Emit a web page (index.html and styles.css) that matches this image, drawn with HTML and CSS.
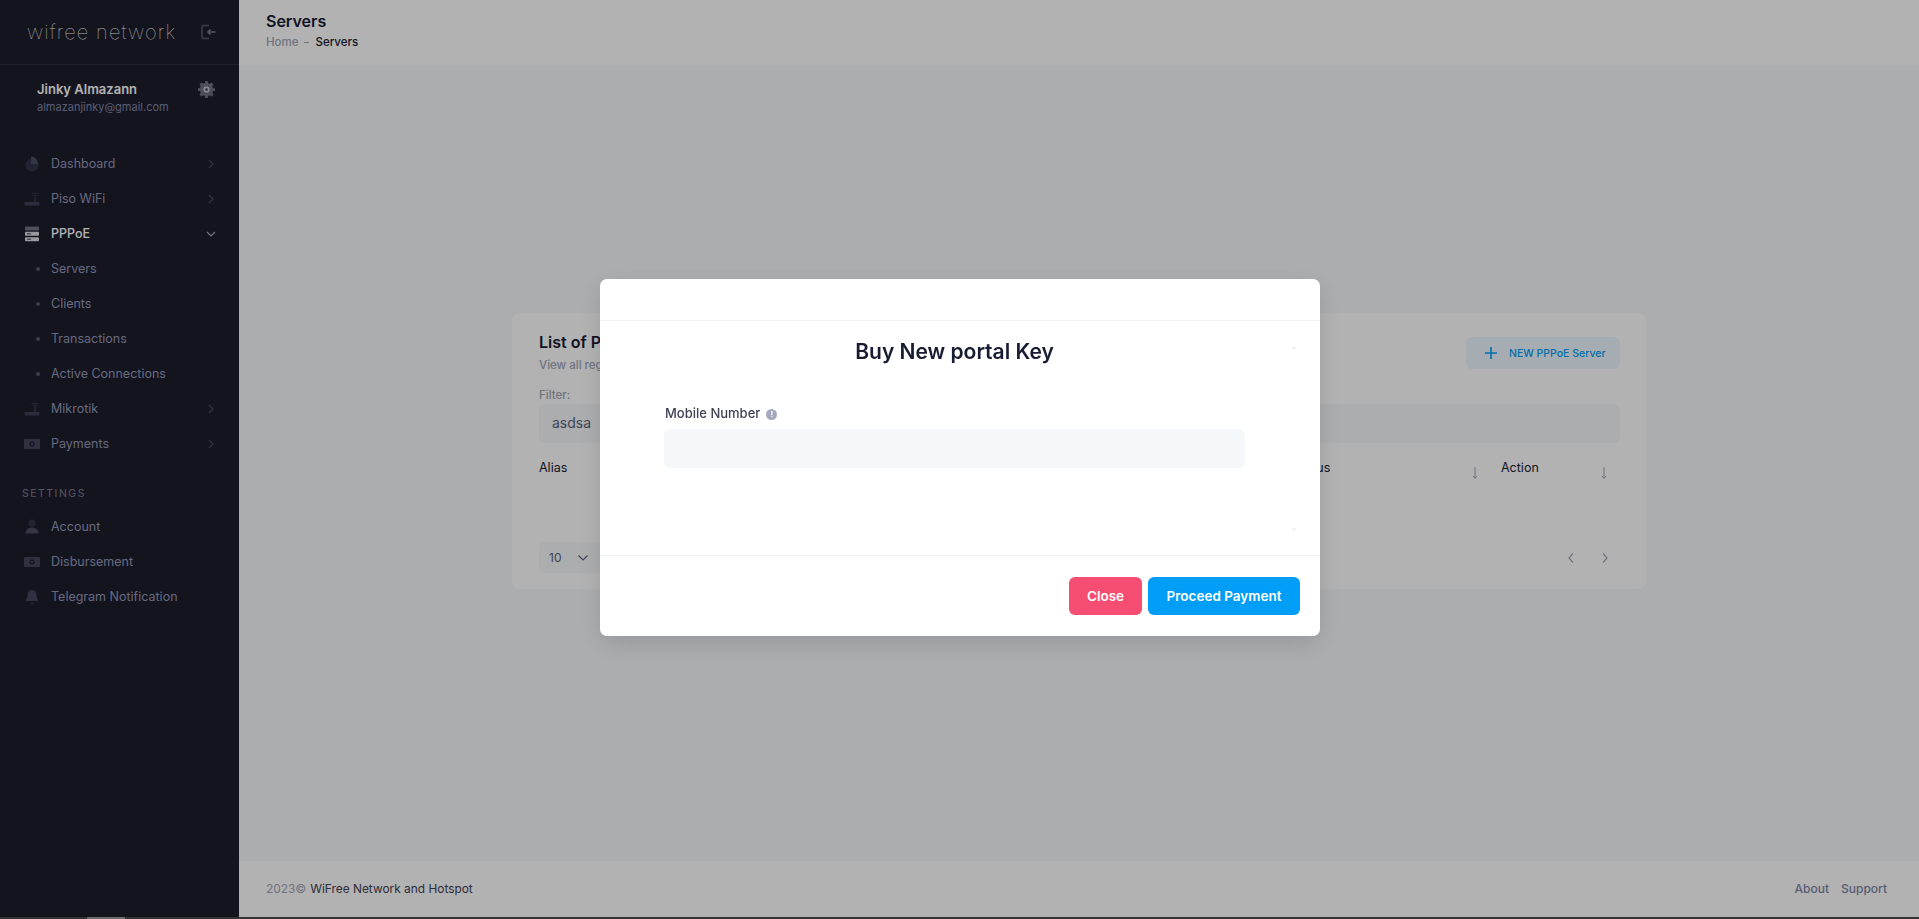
FILE: index.html
```html
<!DOCTYPE html>
<html lang="en">
<head>
<meta charset="utf-8">
<title>Servers</title>
<link rel="stylesheet" href="styles.css">
</head>
<body>
<div class="app">
  <aside class="sidebar">
    <div class="brand">
      <span class="logo">wifree network</span>
      <svg class="brand-toggle" viewBox="0 0 16 16" width="16" height="16"><path d="M9 1.500H3.500A1.500 1.500 0 0 0 2 3v10a1.500 1.500 0 0 0 1.500 1.500H9" fill="none" stroke="#565768" stroke-width="1.600"/><path d="M15.500 8H8M10.500 5.500 8 8l2.500 2.500" fill="none" stroke="#7a7b8a" stroke-width="1.600"/></svg>
    </div>
    <div class="user">
      <div class="user-text">
        <div class="user-name">Jinky Almazann</div>
        <div class="user-mail">almazanjinky@gmail.com</div>
      </div>
      <svg class="user-gear" viewBox="0 0 18 18" width="17" height="17"><path d="M7.600 0h2.800l.4 2.300 1.600.7 2-1.300 2 2-1.300 2 .7 1.600 2.200.4v2.800l-2.200.4-.7 1.600 1.300 2-2 2-2-1.300-1.600.7-.4 2.100H7.600l-.4-2.100-1.600-.7-2 1.300-2-2 1.300-2-.7-1.600L0 10.400V7.600l2.200-.4.7-1.600-1.300-2 2-2 2 1.300 1.600-.7z" fill="#6e6f80"/><circle cx="9" cy="9" r="3.300" fill="#c5c6d0"/><circle cx="9" cy="9" r="1.600" fill="#55566a"/></svg>
    </div>
    <nav class="menu">
      <a class="item">
        <svg class="ico" viewBox="0 0 16 16"><circle cx="8" cy="9" r="6.500" fill="#33344a"/><path d="M7 .5V8h7A7 7 0 0 0 7 .5z" fill="#4a4b62"/></svg>
        <span class="label">Dashboard</span><svg class="chev" viewBox="0 0 8 12"><path d="m2 2 4 4-4 4"/></svg>
      </a>
      <a class="item">
        <svg class="ico" viewBox="0 0 16 16"><path d="M1.500 11h13a1 1 0 0 1 1 1v1.500a1 1 0 0 1-1 1H1.500a1 1 0 0 1-1-1V12a1 1 0 0 1 1-1z" fill="#3f4058"/><path d="M11 11V6" stroke="#4a4b62" fill="none"/><path d="M7.500 3.500a5 5 0 0 1 7 0M9 5.200a2.800 2.800 0 0 1 4 0" stroke="#3a3b52" fill="none"/></svg>
        <span class="label">Piso WiFi</span><svg class="chev" viewBox="0 0 8 12"><path d="m2 2 4 4-4 4"/></svg>
      </a>
      <a class="item active">
        <svg class="ico" viewBox="0 0 16 16"><rect x="1" y="0.500" width="14" height="4" rx="1" fill="#6f7080"/><rect x="1" y="5.800" width="14" height="4" rx="1" fill="#dcdce2"/><rect x="1" y="11.200" width="14" height="4" rx="1" fill="#dcdce2"/><path d="M3 7.800h4M3 13.200h4" stroke="#3a3b52"/></svg>
        <span class="label">PPPoE</span><svg class="chev down" viewBox="0 0 12 8"><path d="m2 2 4 4 4-4"/></svg>
      </a>
      <a class="item sub"><i class="dot"></i><span class="label">Servers</span></a>
      <a class="item sub"><i class="dot"></i><span class="label">Clients</span></a>
      <a class="item sub"><i class="dot"></i><span class="label">Transactions</span></a>
      <a class="item sub"><i class="dot"></i><span class="label">Active Connections</span></a>
      <a class="item">
        <svg class="ico" viewBox="0 0 16 16"><path d="M1.500 11h13a1 1 0 0 1 1 1v1.500a1 1 0 0 1-1 1H1.500a1 1 0 0 1-1-1V12a1 1 0 0 1 1-1z" fill="#3f4058"/><path d="M11 11V6" stroke="#4a4b62" fill="none"/><path d="M7.500 3.500a5 5 0 0 1 7 0M9 5.200a2.800 2.800 0 0 1 4 0" stroke="#3a3b52" fill="none"/></svg>
        <span class="label">Mikrotik</span><svg class="chev" viewBox="0 0 8 12"><path d="m2 2 4 4-4 4"/></svg>
      </a>
      <a class="item">
        <svg class="ico" viewBox="0 0 16 16"><rect y="3" width="16" height="10" rx="1" fill="#45465e"/><circle cx="8" cy="8" r="2.500" fill="#1e1e2d"/><circle cx="8" cy="8" r="1.300" fill="#45465e"/></svg>
        <span class="label">Payments</span><svg class="chev" viewBox="0 0 8 12"><path d="m2 2 4 4-4 4"/></svg>
      </a>
      <div class="section">SETTINGS</div>
      <a class="item">
        <svg class="ico" viewBox="0 0 16 16"><circle cx="8" cy="4" r="3.500" fill="#33344a"/><path d="M1.500 14.500c0-3.500 3-6 6.500-6s6.500 2.500 6.500 6z" fill="#4a4b62"/></svg>
        <span class="label">Account</span>
      </a>
      <a class="item">
        <svg class="ico" viewBox="0 0 16 16"><rect y="3" width="16" height="10" rx="1" fill="#45465e"/><circle cx="8" cy="8" r="2.500" fill="#1e1e2d"/><circle cx="8" cy="8" r="1.300" fill="#45465e"/></svg>
        <span class="label">Disbursement</span>
      </a>
      <a class="item">
        <svg class="ico" viewBox="0 0 16 16"><path d="M8 1a4.500 4.500 0 0 1 4.500 4.500c0 4 1.500 5 2 6.500h-13c.5-1.500 2-2.500 2-6.500A4.500 4.500 0 0 1 8 1z" fill="#45465e"/><circle cx="8" cy="14.300" r="1.500" fill="#33344a"/></svg>
        <span class="label">Telegram Notification</span>
      </a>
    </nav>
  </aside>
  <main class="main">
    <header class="topbar">
      <h1 class="page-title">Servers</h1>
      <div class="crumbs"><span class="crumb-muted">Home</span><span class="crumb-sep"></span><span>Servers</span></div>
    </header>
    <section class="content">
      <div class="card">
        <div class="card-head">
          <div>
            <h2 class="card-title">List of PPPoE Servers</h2>
            <p class="card-sub">View all registered servers</p>
          </div>
          <button class="btn-new"><svg viewBox="0 0 14 14" width="14" height="14"><path d="M7 1v12M1 7h12" stroke="#009ef7" stroke-width="1.600" fill="none"/></svg>NEW PPPoE Server</button>
        </div>
        <label class="filter-label">Filter:</label>
        <div class="filter-input">asdsa</div>
        <div class="table-head">
          <div class="th th-alias">Alias</div>
          <div class="th th-status">Status<svg class="sort" viewBox="0 0 8 14"><path d="M4 1v11M2 10l2 2.500L6 10"/></svg></div>
          <div class="th th-action">Action<svg class="sort" viewBox="0 0 8 14"><path d="M4 1v11M2 10l2 2.500L6 10"/></svg></div>
        </div>
        <div class="pager">
          <div class="page-size">10<svg viewBox="0 0 12 8" width="12" height="8"><path d="m1.500 1.500 4.500 4.500 4.500-4.500" fill="none" stroke="#5e6278" stroke-width="1.200"/></svg></div>
          <div class="page-nav">
            <svg viewBox="0 0 8 12" width="8" height="12"><path d="M6 1.500 2 6l4 4.500" fill="none" stroke="#a1a5b7" stroke-width="1.200"/></svg>
            <svg viewBox="0 0 8 12" width="8" height="12"><path d="m2 1.500 4 4.500-4 4.500" fill="none" stroke="#a1a5b7" stroke-width="1.200"/></svg>
          </div>
        </div>
      </div>
    </section>
    <footer class="footer">
      <div class="foot-left"><span class="crumb-muted">2023©</span><span class="foot-brand">WiFree Network and Hotspot</span></div>
      <div class="foot-links"><a>About</a><a>Support</a></div>
    </footer>
  </main>
</div>
<div class="taskbar"><span class="task-tab"></span></div>
<div class="overlay">
  <div class="modal">
    <div class="modal-head"></div>
    <div class="modal-body">
      <h3 class="modal-title">Buy New portal Key</h3>
      <div class="field-label">Mobile Number<span class="info">!</span></div>
      <div class="field-input"></div>
      <i class="scroll-up"></i>
      <i class="scroll-down"></i>
    </div>
    <div class="modal-foot">
      <button class="btn btn-close">Close</button>
      <button class="btn btn-pay">Proceed Payment</button>
    </div>
  </div>
</div>
</body>
</html>
```

FILE: styles.css
```css
* { box-sizing: border-box; }
html, body { margin: 0; height: 100%; overflow: hidden; }
body { font-family: "Inter", "Liberation Sans", sans-serif; font-size: 12px; color: #181c32; background: #f5f8fa; }
h1, h2, h3, p { margin: 0; }
.app { display: flex; height: 917px; }
.taskbar { height: 2px; background: #4a4a4a; display: flex; }
.task-tab { width: 38px; height: 2px; margin-left: 87px; background: #9a9a9a; }

.sidebar { width: 239px; flex: none; background: #1e1e2d; color: #9899ac; }
.brand { height: 65px; display: flex; align-items: center; justify-content: space-between; padding: 0 23px 1px 27px; border-bottom: 1px solid #2d2d43; }
.logo { font-family: "Inter", sans-serif; font-weight: 100; font-size: 20px; letter-spacing: 1.150px; color: #fff; white-space: nowrap; }
.user { display: flex; justify-content: space-between; align-items: flex-start; padding: 16px 24px 0 37px; height: 81px; }
.user-name { font-size: 13px; font-weight: 600; color: #fff; line-height: 16px; }
.user-mail { font-size: 11px; color: #7e86a8; line-height: 18px; margin-top: 1px; }
.menu { display: flex; flex-direction: column; }
.item { height: 35px; display: flex; align-items: center; padding: 0 24px; font-size: 12.500px; color: #9398b6; }
.ico { width: 16px; height: 16px; margin-right: 11px; flex: none; }
.label { flex: 1; white-space: nowrap; }
.chev { width: 8px; height: 12px; fill: none; stroke: #4a4b5e; stroke-width: 1.200; }
.chev.down { width: 12px; height: 8px; stroke: #a1a5b7; margin-right: -2px; }
.item.active { color: #fff; font-weight: 500; }
.sub { padding-left: 36px; }
.dot { width: 4px; height: 4px; border-radius: 50%; background: #565674; margin-right: 11px; flex: none; }
.section { font-size: 10.500px; letter-spacing: 1.500px; color: #7a7b8e; padding: 26px 22px 8px; line-height: 14px; }

.main { flex: 1; display: flex; flex-direction: column; min-width: 0; }
.topbar { height: 65px; flex: none; background: #fff; padding: 11px 27px 0; }
.page-title { font-size: 16px; font-weight: 600; line-height: 20px; color: #181c32; }
.crumbs { display: flex; align-items: center; font-size: 11.500px; font-weight: 500; line-height: 16px; margin-top: 3px; color: #181c32; }
.crumb-muted { color: #a1a5b7; }
.crumb-sep { width: 5px; height: 1px; background: #a1a5b7; margin: 0 6px; }

.content { flex: 1; display: flex; justify-content: center; padding-top: 248px; }
.card { width: 1134px; height: 276px; background: #fff; border-radius: 8px; padding: 18px 26px 0 27px; display: flex; flex-direction: column; }
.card-head { display: flex; justify-content: space-between; align-items: flex-start; height: 56px; }
.card-title { font-size: 16px; font-weight: 600; line-height: 22px; color: #181c32; }
.card-sub { font-size: 11.500px; color: #a1a5b7; font-weight: 500; line-height: 16px; margin-top: 4px; }
.btn-new { width: 154px; height: 32px; margin-top: 6px; border: 0; border-radius: 6px; background: #ecf8ff; color: #009ef7; font: 500 10.500px "Inter", sans-serif; display: flex; align-items: center; gap: 11px; padding: 0 0 0 18px; }
.filter-label { font-size: 11.500px; font-weight: 500; color: #a1a5b7; line-height: 16px; }
.filter-input { height: 39px; margin-top: 1px; border-radius: 6px; background: #f5f8fa; padding: 0 13px; line-height: 38px; font-size: 14px; color: #5e6278; }
.table-head { display: flex; height: 38px; padding-top: 16px; line-height: 18px; font-size: 12.500px; color: #181c32; }
.th { display: flex; justify-content: space-between; }
.th-alias { flex: 1; }
.th-status { width: 186px; margin-right: 22px; }
.th-action { width: 119px; padding-right: 12px; }
.sort { width: 8px; height: 14px; fill: none; stroke: #a1a5b7; stroke-width: 1; margin-top: 7px; }
.pager { display: flex; justify-content: space-between; align-items: center; margin-top: 61px; }
.page-size { width: 70px; height: 31px; border-radius: 6px; background: #f5f8fa; display: flex; align-items: center; justify-content: space-between; padding: 0 20px 0 10px; font-size: 12px; color: #5e6278; }
.page-nav { display: flex; gap: 26px; padding-right: 11px; }

.footer { height: 56px; flex: none; background: #fff; display: flex; align-items: center; justify-content: space-between; padding: 0 32px 2px 27px; font-size: 12px; }
.foot-left { font-size: 11.900px; }
.foot-brand { margin-left: 4px; color: #3f4254; }
.foot-links { display: flex; gap: 12px; color: #7e86a8; font-weight: 500; }

.overlay { position: fixed; inset: 0; background: rgba(0, 0, 0, .3); }
.modal { position: absolute; left: 600px; top: 279px; width: 720px; height: 357px; background: #fff; border-radius: 7px; box-shadow: 0 8px 24px rgba(0, 0, 0, .12); display: flex; flex-direction: column; }
.modal-head { height: 42px; border-bottom: 1px solid #eff2f5; flex: none; }
.modal-body { height: 235px; flex: none; border-bottom: 1px solid #eff2f5; padding: 19px 75px 0 64px; position: relative; }
.modal-title { font-size: 21px; font-weight: 600; line-height: 24px; color: #181c32; text-align: center; }
.field-label { margin-top: 40px; display: flex; align-items: center; gap: 6px; font-size: 13px; font-weight: 500; color: #3f4254; line-height: 18px; margin-left: 1px; }
.info { width: 11px; height: 11px; border-radius: 50%; background: #a5a8bd; color: #fff; font-size: 8px; font-weight: 700; line-height: 11px; text-align: center; margin-top: 2px; }
.field-input { height: 39px; margin-top: 7px; border-radius: 6px; background: #f5f8fa; }
.scroll-up, .scroll-down { position: absolute; right: 23px; width: 0; height: 0; border-left: 3px solid transparent; border-right: 3px solid transparent; }
.scroll-up { top: 25px; border-bottom: 3px solid #eff2f5; }
.scroll-down { top: 207px; border-top: 3px solid #eff2f5; }
.modal-foot { flex: 1; display: flex; justify-content: flex-end; gap: 6px; padding: 21px 20px 0 0; }
.btn { height: 38px; border: 0; border-radius: 6px; color: #fff; font: 600 13.500px "Inter", sans-serif; }
.btn-close { width: 73px; background: #f64e72; }
.btn-pay { width: 152px; background: #009ef7; }
```
